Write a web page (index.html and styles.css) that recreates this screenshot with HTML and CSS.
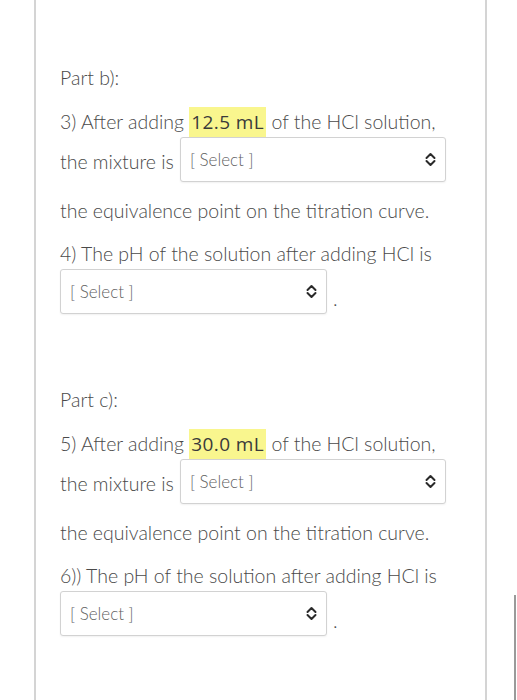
FILE: index.html
```html
<!DOCTYPE html>
<html>
<head>
<meta charset="utf-8">
<link rel="stylesheet" href="styles.css">
</head>
<body>
<div class="box">
  <p class="line part">Part b):</p>
  <p class="line q">3) After adding <span class="hl">12.5 mL</span> of the HCl solution,</p>
  <div class="row mix">
    <span class="lbl">the mixture is</span>
    <span class="sel wide"><span class="ph">[ Select ]</span><svg class="chev" viewBox="0 0 11 15" width="11" height="15"><path d="M1.5 6 L5.5 2 L9.5 6 M1.5 9 L5.5 13 L9.5 9" fill="none" stroke="#2a2a2a" stroke-width="2" stroke-linecap="round" stroke-linejoin="round"/></svg></span>
  </div>
  <p class="line eq">the equivalence point on the titration curve.</p>
  <p class="line ph4">4) The pH of the solution after adding HCl is</p>
  <div class="row selrow">
    <span class="sel narrow"><span class="ph">[ Select ]</span><svg class="chev" viewBox="0 0 11 15" width="11" height="15"><path d="M1.5 6 L5.5 2 L9.5 6 M1.5 9 L5.5 13 L9.5 9" fill="none" stroke="#2a2a2a" stroke-width="2" stroke-linecap="round" stroke-linejoin="round"/></svg></span>
    <span class="dot">.</span>
  </div>

  <p class="line part partc">Part c):</p>
  <p class="line q">5) After adding <span class="hl">30.0 mL</span> of the HCl solution,</p>
  <div class="row mix">
    <span class="lbl">the mixture is</span>
    <span class="sel wide"><span class="ph">[ Select ]</span><svg class="chev" viewBox="0 0 11 15" width="11" height="15"><path d="M1.5 6 L5.5 2 L9.5 6 M1.5 9 L5.5 13 L9.5 9" fill="none" stroke="#2a2a2a" stroke-width="2" stroke-linecap="round" stroke-linejoin="round"/></svg></span>
  </div>
  <p class="line eq">the equivalence point on the titration curve.</p>
  <p class="line ph4">6)) The pH of the solution after adding HCl is</p>
  <div class="row selrow">
    <span class="sel narrow"><span class="ph">[ Select ]</span><svg class="chev" viewBox="0 0 11 15" width="11" height="15"><path d="M1.5 6 L5.5 2 L9.5 6 M1.5 9 L5.5 13 L9.5 9" fill="none" stroke="#2a2a2a" stroke-width="2" stroke-linecap="round" stroke-linejoin="round"/></svg></span>
    <span class="dot">.</span>
  </div>
</div>
<div class="edge"></div>
</body>
</html>
```

FILE: styles.css
```css
html, body {
  margin: 0;
  padding: 0;
  background: #ffffff;
  overflow: hidden;
}
body {
  font-family: Lato, "Open Sans", "Liberation Sans", sans-serif;
  font-weight: 300;
  color: #4a4a4a;
  width: 517px;
  height: 700px;
  position: relative;
}
.box {
  margin-left: 34px;
  width: 453px;
  height: 700px;
  border-left: 2px solid #d4d4d4;
  border-right: 2px solid #d4d4d4;
  padding: 66px 0 0 24px;
  box-sizing: border-box;
}
.line {
  margin: 0;
  font-size: 19.5px;
  line-height: 24px;
  white-space: nowrap;
}
.q { margin-top: 20px; }
.hl {
  background: #f9f68e;
  color: #3a3a3a;
  font-family: "Open Sans", Lato, sans-serif;
  font-weight: 400;
  font-size: 19px;
  letter-spacing: 0.4px;
  padding: 2px 2px 3px;
}
.row {
  display: flex;
  align-items: center;
  font-size: 19.5px;
}
.mix { margin-top: 3px; }
.lbl {
  line-height: 24px;
  margin-top: 4px;
  margin-right: 6px;
}
.sel {
  display: flex;
  align-items: center;
  justify-content: space-between;
  box-sizing: border-box;
  height: 45px;
  border: 1px solid #d2d2d2;
  border-radius: 3px;
  box-shadow: 0 1px 2px rgba(0,0,0,0.06);
  padding: 0 9px 0 9px;
  background: #fff;
}
.sel .ph {
  font-size: 17px;
  color: #5f5f5f;
  margin-top: 0;
}
.wide { width: 266px; }
.narrow { width: 267px; }
.chev { display: block; margin-top: 0; }
.eq { margin-top: 17px; }
.ph4 { margin-top: 19px; }
.selrow { margin-top: 3px; }
.dot {
  margin-left: 6px;
  margin-top: 14px;
  line-height: 24px;
}
.partc { margin-top: 74px; }
.edge {
  position: absolute;
  left: 514px;
  top: 595px;
  width: 2px;
  height: 105px;
  background: #9a9a9a;
}
```
